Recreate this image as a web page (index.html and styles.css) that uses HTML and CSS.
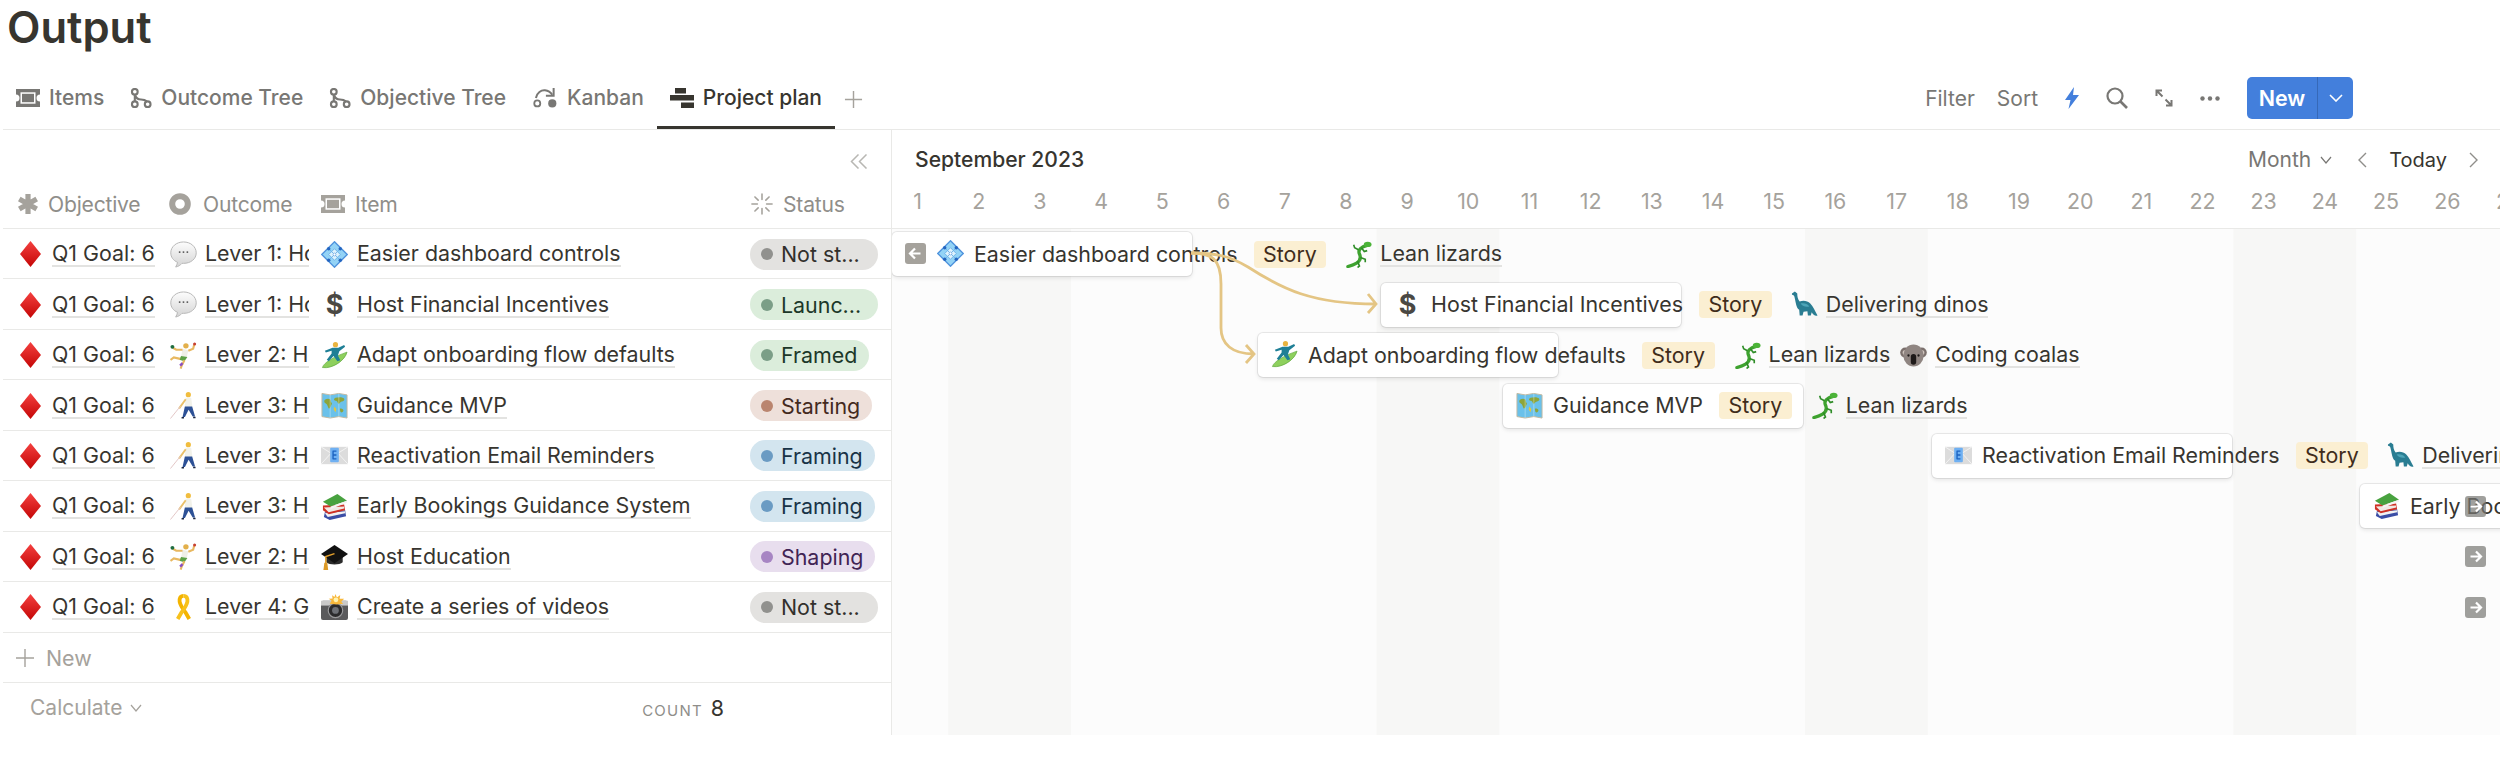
FILE: index.html
```html
<!DOCTYPE html>
<html lang="en">
<head>
<meta charset="utf-8">
<title>Output</title>
<link rel="stylesheet" href="styles.css">
</head>
<body>
<svg class="defs" aria-hidden="true">
  <defs>
    <linearGradient id="g-red" x1="0" y1="0" x2="0" y2="1"><stop offset="0" stop-color="#f4403f"/><stop offset="1" stop-color="#c40606"/></linearGradient>
    <linearGradient id="g-bub" x1="0" y1="0" x2="0" y2="1"><stop offset="0" stop-color="#fdfdfd"/><stop offset="1" stop-color="#d4d4d4"/></linearGradient>
  </defs>
  <symbol id="e-red" viewBox="0 0 21 26"><path d="M10.500 0 21 13 10.500 26 0 13z" fill="url(#g-red)"/></symbol>
  <symbol id="e-bubble" viewBox="0 0 28 28"><path d="M14 1C6.500 1 .8 6 .8 12.300c0 4.400 2.700 8 7 9.800-.3 1.800-1 3.300-1.900 4.900 2.600-.5 4.900-1.900 6.500-3.800H14c7.500 0 13.200-4.600 13.200-10.900S21.500 1 14 1z" fill="url(#g-bub)" stroke="#b5b5b5"/><circle cx="10" cy="11.500" r="1" fill="#555"/><circle cx="14" cy="11.500" r="1" fill="#555"/><circle cx="18" cy="11.500" r="1" fill="#555"/></symbol>
  <symbol id="e-gem" viewBox="0 0 28 28"><path d="M14 .8 27.200 14 14 27.200 .8 14z" fill="#93d3f6" stroke="#4f93dd" stroke-width="1.400"/><path d="M14 8 20 14 14 20 8 14z" fill="#dff3fd" stroke="#6fb2e8"/><path d="M7.500 7.500 20.500 20.500M20.500 7.500 7.500 20.500" stroke="#6fb2e8"/><circle cx="14" cy="14" r="1.500" fill="#fff" stroke="#4f93dd" stroke-width=".6"/><circle cx="8" cy="8" r="1.800" fill="#2565c0"/><circle cx="20" cy="8" r="1.800" fill="#2565c0"/><circle cx="8" cy="20" r="1.800" fill="#2565c0"/><circle cx="20" cy="20" r="1.800" fill="#2565c0"/></symbol>
  <symbol id="e-ball" viewBox="0 0 28 28"><circle cx="16.500" cy="4" r="2.800" fill="#e3b04b"/><path d="M13 7 19 8.500 17.500 15.500 11.500 15z" fill="#efefe8"/><path d="M11.500 14.500 18 15.500 15 20 9.500 18.500z" fill="#5ca146"/><path d="M13 8 6.500 8 3 6" stroke="#e8b860" stroke-width="2.200" fill="none"/><path d="M19 9 24 7 25 3" stroke="#e8b860" stroke-width="2.200" fill="none"/><circle cx="2.500" cy="5" r="2" fill="#1f6d3f"/><circle cx="25.500" cy="2" r="1.600" fill="#c7402f"/><path d="M10.500 17.500 4 16 .5 18.500" stroke="#e8b860" stroke-width="2.200" fill="none"/><path d="M15 19 12.500 23.500 11 27.500" stroke="#e8b860" stroke-width="2.200" fill="none"/><path d="M13 22 10.500 24.500" stroke="#8a4fc0" stroke-width="2.600"/></symbol>
  <symbol id="e-cane" viewBox="0 0 28 28"><circle cx="19" cy="2.800" r="2.700" fill="#f1bd3e"/><path d="M16 6h6l1.200 9.500h-7.800z" fill="#f2f2ea"/><path d="M15.400 15 23 15 26 25.500h-2.500L19.300 18.500 15.500 26h-2.500z" fill="#2d5196"/><path d="M16.300 7.500 9.500 17" stroke="#e9c06a" stroke-width="2"/><path d="M11 14.500 .5 27.500" stroke="#e2c5c5" stroke-width="1"/><path d="M24 26.500h2.500M14.500 26.800H12" stroke="#1b2740" stroke-width="1.500"/></symbol>
  <symbol id="e-surf" viewBox="0 0 28 28"><path d="M1.500 26.500C3 21 14 15 27 10.500 25 19 12 28 1.500 26.500z" fill="#8ed05d" stroke="#5da53a" stroke-width=".7"/><circle cx="15" cy="2.800" r="2.700" fill="#e9b440"/><path d="M12 6 18 6 24 3 25 5 19 9.500 17.500 14 20 19 17 20 13 14.500 8 20 6 18.500 11 12 11 9 5 11 4 9z" fill="#1f7f96"/></symbol>
  <symbol id="e-map" viewBox="0 0 28 28"><path d="M1 1.500 9.500 3 18.500 1.500 27 3v24l-8.500-1.500L9.500 27 1 25.500z" fill="#6ac1ea" stroke="#c0b8a0"/><path d="M4 8c3-2 6-1 6 1s2 2 1 4-2 5-3 4-1-4-3-5-2-3-1-4zM15 6c3-1 8-1 9 1s-2 3-3 3-2 3-3 2-1-3-3-3 -2-2 0-3zM20 17c2 0 4 1 3 3s-3 1-3 0-1-3 0-3z" fill="#8da53b"/><path d="M14 15l2 3-1 3-2-3z" fill="#e1c743"/><path d="M9.500 3v24M18.500 1.500v24" stroke="#fff" stroke-opacity=".35"/></symbol>
  <symbol id="e-mail" viewBox="0 0 28 28"><path d="M0 5h28v18H0z" fill="#dcdcdc"/><path d="M0 5 14 14 28 5M0 23 10 12M28 23 18 12" fill="none" stroke="#f4f4f4"/><rect x="9.500" y="6" width="9" height="15" rx="1" fill="#6fb0f2"/><path d="M12 9.500h4M12 13.500h4M12 17.500h4M12.500 9.500v8" stroke="#1c62c0" stroke-width="1.400" fill="none"/></symbol>
  <symbol id="e-books" viewBox="0 0 28 28"><path d="M4 20 25 18 26 24 9 28 3 25z" fill="#3b4ea6"/><path d="M4 21 25 19v2L7 25z" fill="#f2f2f2"/><path d="M2 13 24 12 25 18 8 22 2 18z" fill="#cf3125"/><path d="M3 15 24 14v2L8 20z" fill="#f1e9e4"/><path d="M2 9 17 1 27 8 10 14z" fill="#48a23f"/><path d="M10 14 27 8v2L10 16.500z" fill="#f4f4f4"/></symbol>
  <symbol id="e-cap" viewBox="0 0 28 28"><path d="M5.500 13v7c3 3 14 3 17 0v-7z" fill="#2b2b2b"/><path d="M14 2 28 11.500 14 21 0 11.500z" fill="#111"/><path d="M14 11 5 14v7" stroke="#e3a02c" stroke-width="1.600" fill="none"/><path d="M3.500 20.500h3L7.500 28h-5z" fill="#dd9a26"/></symbol>
  <symbol id="e-ribbon" viewBox="0 0 24 28"><path d="M12 2C8.500 2 7.500 5 8 8c.6 3.500 3 7 6 11l4 7" fill="none" stroke="#f4b400" stroke-width="4"/><path d="M12 2c3.500 0 4.500 3 4 6-.6 3.500-3 7-6 11l-4 7" fill="none" stroke="#f7c11c" stroke-width="4"/></symbol>
  <symbol id="e-camera" viewBox="0 0 28 28"><rect x="0" y="7" width="28" height="20" rx="2" fill="#5a5a5c"/><rect x="0" y="7" width="28" height="5" fill="#c9c9c9"/><circle cx="15" cy="17" r="7.500" fill="#2b2b2d" stroke="#9a9a9c" stroke-width="1.200"/><circle cx="15" cy="17" r="3.500" fill="#6d7076"/><path d="M15 0l1.500 3.500L20 1l-.7 4L24 5l-3 3 2 2-7 1-7-1 2-3-3-2 4-.3-.5-3.500 2.500 2z" fill="#f8b83c"/><circle cx="15.500" cy="6" r="2.500" fill="#fff3b0"/></symbol>
  <symbol id="e-lizard" viewBox="0 0 28 28"><path d="M23 4.500C17 6 13 9 15 13.500c1.500 3.400 1 7-3 9.500-3 1.800-6 2.800-9 3.500" fill="none" stroke="#3ea22f" stroke-width="3.400" stroke-linecap="round"/><ellipse cx="23.500" cy="3.500" rx="4" ry="2.800" fill="#4bb338"/><path d="M17 7 20 11 23 10M14 9 10 7 9 4M16 17 21 19 21 22M13 21 15 26 13 27.500" fill="none" stroke="#2f8d28" stroke-width="1.700"/></symbol>
  <symbol id="e-dino" viewBox="0 0 28 28"><path d="M1 2.500 4 .5l2.500 2c0 3 .5 6 2.500 8.500 3.500-1.500 8-1 11 2 3 3 5 8 7.500 12.500-2.500 1-4.500-1-6-3.500l-1 3.500h-3l-.5-4.500-4 .5-1 4H9l-.5-6C5.500 18 5 12 3.800 7 3.500 5.500 3 4 1 4z" fill="#2a7d92"/><path d="M10 13c3-1 7 0 9 3-3 .5-7 .5-9-3z" fill="#4ea5b8"/></symbol>
  <symbol id="e-koala" viewBox="0 0 28 28"><circle cx="5.500" cy="11" r="5.300" fill="#7b706c"/><circle cx="22.500" cy="11" r="5.300" fill="#7b706c"/><circle cx="5.500" cy="11" r="2.800" fill="#cfc4bd"/><circle cx="22.500" cy="11" r="2.800" fill="#cfc4bd"/><ellipse cx="14" cy="14" rx="10.500" ry="11.500" fill="#8f8581"/><rect x="11.200" y="12.500" width="5.600" height="11" rx="2.800" fill="#1e1a19"/><circle cx="8.800" cy="14" r="1.200" fill="#1e1a19"/><circle cx="19.200" cy="14" r="1.200" fill="#1e1a19"/></symbol>
  <symbol id="i-ticket" viewBox="0 0 24 18"><path d="M0 0h24v5.500a3.500 3.500 0 0 0 0 7V18H0v-5.500a3.500 3.500 0 0 0 0-7z" fill="currentColor"/><rect x="4.500" y="3.300" width="15" height="11.400" fill="#fff"/><rect x="6" y="4.800" width="12" height="8.400" fill="currentColor"/></symbol>
  <symbol id="i-tree" viewBox="0 0 22 21"><g fill="none" stroke="currentColor" stroke-width="2.200"><circle cx="4.500" cy="4" r="3"/><circle cx="4.500" cy="17" r="3"/><circle cx="18" cy="17" r="3"/><path d="M4.500 7v7M5 8c1 3 3 4 6 4 3 0 5 1 6 2"/></g></symbol>
  <symbol id="i-kanban" viewBox="0 0 26 22"><circle cx="4.500" cy="17" r="3.300" fill="none" stroke="currentColor" stroke-width="2"/><circle cx="21" cy="17" r="4.500" fill="currentColor"/><path d="M3 11C4 5 9 2 13 2.500c3 .4 6 2 8 5" fill="none" stroke="currentColor" stroke-width="2.200"/><path d="M22.500 0v8.500H14" fill="none" stroke="currentColor" stroke-width="2.200"/></symbol>
  <symbol id="i-plan" viewBox="0 0 24 20"><rect x="5" y="0" width="11" height="5.500" fill="currentColor"/><rect x="0" y="7" width="24" height="5.500" fill="currentColor"/><rect x="11" y="14.500" width="13" height="5.500" fill="currentColor"/></symbol>
  <symbol id="i-star" viewBox="0 0 22 22"><path d="M11 11V1M11 11l8.700-5M11 11l8.700 5M11 11v10M11 11l-8.700 5M11 11 2.300 6" stroke="currentColor" stroke-width="5.200"/></symbol>
  <symbol id="i-status" viewBox="0 0 24 24"><path d="M12 1v6M12 17v6M1 12h6M17 12h6M4.300 4.300l3.500 3.500M16.200 16.200l3.500 3.500M4.300 19.700l3.500-3.500M16.200 7.800l3.500-3.500" stroke="currentColor" stroke-width="1.700" stroke-linecap="round"/></symbol>
  <symbol id="i-left" viewBox="0 0 21 21"><path d="M15.500 10.500h-10M10 5.500l-5 5 5 5" fill="none" stroke="#fff" stroke-width="2.200"/></symbol>
  <symbol id="i-right" viewBox="0 0 21 21"><path d="M5.500 10.500h10M11 5.500l5 5-5 5" fill="none" stroke="#fff" stroke-width="2.200"/></symbol>
</svg>

<div class="page">
  <h1 class="title">Output</h1>

  <nav class="views">
    <a class="tab"><svg class="tab-icon w24"><use href="#i-ticket"/></svg>Items</a>
    <a class="tab"><svg class="tab-icon w22"><use href="#i-tree"/></svg>Outcome Tree</a>
    <a class="tab"><svg class="tab-icon w22"><use href="#i-tree"/></svg>Objective Tree</a>
    <a class="tab"><svg class="tab-icon w26"><use href="#i-kanban"/></svg>Kanban</a>
    <a class="tab active"><svg class="tab-icon w24"><use href="#i-plan"/></svg>Project plan</a>
    <svg class="add-view" viewBox="0 0 20 20"><path d="M10 1v18M1 10h18" stroke="currentColor" stroke-width="1.500"/></svg>
    <div class="actions">
      <span class="action">Filter</span>
      <span class="action">Sort</span>
      <svg class="bolt" viewBox="0 0 14 22"><path d="M9 0 0 13h5.500L3.500 22 14 8H8z" fill="#437fdc"/></svg>
      <svg class="tool" viewBox="0 0 22 22"><circle cx="9" cy="9" r="7.500" fill="none" stroke="currentColor" stroke-width="2.200"/><path d="M14.500 14.500 21 21" stroke="currentColor" stroke-width="2.600"/></svg>
      <svg class="tool small" viewBox="0 0 18 18"><path d="M2 2l5.500 5.500M10.500 10.500 16 16M1.500 7V1.500H7M16.500 11v5.500H11" fill="none" stroke="currentColor" stroke-width="2"/></svg>
      <svg class="dots" viewBox="0 0 20 5"><circle cx="2.500" cy="2.500" r="2.200" fill="currentColor"/><circle cx="10" cy="2.500" r="2.200" fill="currentColor"/><circle cx="17.500" cy="2.500" r="2.200" fill="currentColor"/></svg>
      <div class="new-btn">
        <span class="new-main">New</span>
        <span class="new-more"><svg class="chev-w" viewBox="0 0 14 8"><path d="M1 1l6 6 6-6" fill="none" stroke="#fff" stroke-width="1.600"/></svg></span>
      </div>
    </div>
  </nav>

  <main class="board">
    <section class="table">
      <div class="collapse"><svg class="collapse-icon" viewBox="0 0 18 15"><path d="M8.500 .5 1.500 7.500l7 7M16.500 .5l-7 7 7 7" fill="none" stroke="currentColor" stroke-width="1.500"/></svg></div>
      <div class="cols row-grid">
        <div class="head h-obj"><svg class="head-icon"><use href="#i-star"/></svg>Objective</div>
        <div class="head h-out"><svg class="head-icon" viewBox="0 0 22 22"><circle cx="11" cy="11" r="7.800" fill="none" stroke="currentColor" stroke-width="6"/></svg>Outcome</div>
        <div class="head h-item"><svg class="head-icon ticket"><use href="#i-ticket"/></svg>Item</div>
        <div class="head h-status"><svg class="head-icon"><use href="#i-status"/></svg>Status</div>
      </div>

      <div class="row row-grid">
        <div class="cell c-obj"><svg class="em-red"><use href="#e-red"/></svg><span class="link">Q1 Goal: 6</span></div>
        <div class="cell c-out"><svg class="em"><use href="#e-bubble"/></svg><span class="link clip">Lever 1: How might we</span></div>
        <div class="cell c-item"><svg class="em"><use href="#e-gem"/></svg><span class="link">Easier dashboard controls</span></div>
        <div class="cell c-status"><span class="pill trunc gray"><i class="dot"></i>Not st...</span></div>
      </div>
      <div class="row row-grid">
        <div class="cell c-obj"><svg class="em-red"><use href="#e-red"/></svg><span class="link">Q1 Goal: 6</span></div>
        <div class="cell c-out"><svg class="em"><use href="#e-bubble"/></svg><span class="link clip">Lever 1: How might we</span></div>
        <div class="cell c-item"><span class="em dollar">$</span><span class="link">Host Financial Incentives</span></div>
        <div class="cell c-status"><span class="pill trunc green"><i class="dot"></i>Launc...</span></div>
      </div>
      <div class="row row-grid">
        <div class="cell c-obj"><svg class="em-red"><use href="#e-red"/></svg><span class="link">Q1 Goal: 6</span></div>
        <div class="cell c-out"><svg class="em"><use href="#e-ball"/></svg><span class="link clip">Lever 2: How might we</span></div>
        <div class="cell c-item"><svg class="em"><use href="#e-surf"/></svg><span class="link">Adapt onboarding flow defaults</span></div>
        <div class="cell c-status"><span class="pill green"><i class="dot"></i>Framed</span></div>
      </div>
      <div class="row row-grid">
        <div class="cell c-obj"><svg class="em-red"><use href="#e-red"/></svg><span class="link">Q1 Goal: 6</span></div>
        <div class="cell c-out"><svg class="em"><use href="#e-cane"/></svg><span class="link clip">Lever 3: How might we</span></div>
        <div class="cell c-item"><svg class="em"><use href="#e-map"/></svg><span class="link">Guidance MVP</span></div>
        <div class="cell c-status"><span class="pill brown"><i class="dot"></i>Starting</span></div>
      </div>
      <div class="row row-grid">
        <div class="cell c-obj"><svg class="em-red"><use href="#e-red"/></svg><span class="link">Q1 Goal: 6</span></div>
        <div class="cell c-out"><svg class="em"><use href="#e-cane"/></svg><span class="link clip">Lever 3: How might we</span></div>
        <div class="cell c-item"><svg class="em"><use href="#e-mail"/></svg><span class="link">Reactivation Email Reminders</span></div>
        <div class="cell c-status"><span class="pill blue"><i class="dot"></i>Framing</span></div>
      </div>
      <div class="row row-grid">
        <div class="cell c-obj"><svg class="em-red"><use href="#e-red"/></svg><span class="link">Q1 Goal: 6</span></div>
        <div class="cell c-out"><svg class="em"><use href="#e-cane"/></svg><span class="link clip">Lever 3: How might we</span></div>
        <div class="cell c-item"><svg class="em"><use href="#e-books"/></svg><span class="link">Early Bookings Guidance System</span></div>
        <div class="cell c-status"><span class="pill blue"><i class="dot"></i>Framing</span></div>
      </div>
      <div class="row row-grid">
        <div class="cell c-obj"><svg class="em-red"><use href="#e-red"/></svg><span class="link">Q1 Goal: 6</span></div>
        <div class="cell c-out"><svg class="em"><use href="#e-ball"/></svg><span class="link clip">Lever 2: How might we</span></div>
        <div class="cell c-item"><svg class="em"><use href="#e-cap"/></svg><span class="link">Host Education</span></div>
        <div class="cell c-status"><span class="pill purple"><i class="dot"></i>Shaping</span></div>
      </div>
      <div class="row row-grid">
        <div class="cell c-obj"><svg class="em-red"><use href="#e-red"/></svg><span class="link">Q1 Goal: 6</span></div>
        <div class="cell c-out"><svg class="em"><use href="#e-ribbon"/></svg><span class="link clip">Lever 4: Grow the</span></div>
        <div class="cell c-item"><svg class="em"><use href="#e-camera"/></svg><span class="link">Create a series of videos</span></div>
        <div class="cell c-status"><span class="pill trunc gray"><i class="dot"></i>Not st...</span></div>
      </div>

      <div class="row new-row"><svg class="plus" viewBox="0 0 18 18"><path d="M9 0v18M0 9h18" stroke="currentColor" stroke-width="1.400"/></svg>New</div>
      <div class="foot">
        <span class="calc">Calculate<svg class="chev-s" viewBox="0 0 12 8"><path d="M1 1l5 6 5-6" fill="none" stroke="currentColor" stroke-width="1.200"/></svg></span>
        <span class="count"><span class="count-label">COUNT</span><span class="count-val">8</span></span>
      </div>
    </section>

    <section class="chart">
      <header class="chart-head">
        <div class="month-bar">
          <span class="month-name">September 2023</span>
          <div class="month-tools">
            <span class="scale">Month<svg class="chev-s" viewBox="0 0 12 8"><path d="M1 1l5 6 5-6" fill="none" stroke="currentColor" stroke-width="1.200"/></svg></span>
            <svg class="nav-arrow" viewBox="0 0 9 16"><path d="M8 1 1 8l7 7" fill="none" stroke="currentColor" stroke-width="1.400"/></svg>
            <span class="today">Today</span>
            <svg class="nav-arrow" viewBox="0 0 9 16"><path d="M1 1l7 7-7 7" fill="none" stroke="currentColor" stroke-width="1.400"/></svg>
          </div>
        </div>
        <div class="days">
          <span>1</span><span>2</span><span>3</span><span>4</span><span>5</span><span>6</span><span>7</span><span>8</span><span>9</span><span>10</span><span>11</span><span>12</span><span>13</span><span>14</span><span>15</span><span>16</span><span>17</span><span>18</span><span>19</span><span>20</span><span>21</span><span>22</span><span>23</span><span>24</span><span>25</span><span>26</span><span>27</span>
        </div>
      </header>

      <div class="canvas">
        <div class="lane l1">
          <div class="bar">
            <svg class="jump"><use href="#i-left"/></svg>
            <svg class="em"><use href="#e-gem"/></svg>
            <span class="bar-name">Easier dashboard controls</span>
          </div>
          <span class="tag">Story</span>
          <svg class="em"><use href="#e-lizard"/></svg><span class="link">Lean lizards</span>
        </div>
        <div class="lane l2">
          <div class="bar">
            <span class="em dollar">$</span>
            <span class="bar-name">Host Financial Incentives</span>
          </div>
          <span class="tag">Story</span>
          <svg class="em"><use href="#e-dino"/></svg><span class="link">Delivering dinos</span>
        </div>
        <div class="lane l3">
          <div class="bar">
            <svg class="em"><use href="#e-surf"/></svg>
            <span class="bar-name">Adapt onboarding flow defaults</span>
          </div>
          <span class="tag">Story</span>
          <svg class="em"><use href="#e-lizard"/></svg><span class="link">Lean lizards</span>
          <svg class="em koala"><use href="#e-koala"/></svg><span class="link">Coding coalas</span>
        </div>
        <div class="lane l4">
          <div class="bar">
            <svg class="em"><use href="#e-map"/></svg>
            <span class="bar-name">Guidance MVP</span>
          </div>
          <span class="tag">Story</span>
          <svg class="em"><use href="#e-lizard"/></svg><span class="link">Lean lizards</span>
        </div>
        <div class="lane l5">
          <div class="bar">
            <svg class="em"><use href="#e-mail"/></svg>
            <span class="bar-name">Reactivation Email Reminders</span>
          </div>
          <span class="tag">Story</span>
          <svg class="em"><use href="#e-dino"/></svg><span class="link">Delivering dinos</span>
        </div>
        <div class="lane l6">
          <div class="bar">
            <svg class="em"><use href="#e-books"/></svg>
            <span class="bar-name">Early Bookings Guidance System</span>
          </div>
        </div>

        <svg class="links" viewBox="0 0 1608 506">
          <path d="M299 24C322 24 336 26 356 38 390 60 420 75 484 75M476 65l8 10-8 9"/>
          <path d="M299 24C320 24 329 30 329 55V99C329 115 340 125 362 125M354 116l8 9-8 9"/>
        </svg>

        <svg class="off off1"><use href="#i-right"/></svg>
        <svg class="off off2"><use href="#i-right"/></svg>
        <svg class="off off3"><use href="#i-right"/></svg>
      </div>
    </section>
  </main>
</div>
</body>
</html>
```
FILE: styles.css
```css
* { box-sizing: border-box; }
html, body { margin: 0; padding: 0; background: #fff; overflow: hidden; }
body {
  font-family: Inter, "Liberation Sans", sans-serif;
  font-size: 21.4px;
  color: #37352f;
}
.defs { position: absolute; width: 0; height: 0; }
.page { width: 2500px; height: 765px; padding-left: 3px; overflow: hidden; }

.title {
  margin: 0;
  height: 69px;
  padding: 3px 0 0 4px;
  font-size: 43.5px;
  line-height: 48px;
  font-weight: 600;
}

.views {
  display: flex;
  align-items: stretch;
  height: 61px;
  border-bottom: 1px solid #e9e9e7;
}
.tab {
  display: flex;
  align-items: center;
  gap: 9px;
  padding: 0 13px;
  color: #787774;
  font-size: 21px;
  font-weight: 500;
  white-space: nowrap;
  border-bottom: 3px solid transparent;
}
.tab.active { color: #37352f; border-bottom-color: #37352f; }
.tab-icon { height: 20px; flex: none; color: #787774; }
.tab.active .tab-icon { color: #37352f; }
.w22 { width: 22px; }
.w24 { width: 24px; }
.w26 { width: 26px; }
.add-view { width: 19px; height: 19px; margin: 21px 0 0 9px; color: #a5a29c; }

.actions {
  display: flex;
  align-items: center;
  gap: 27px;
  margin-left: auto;
  padding: 0 147px 2px 0;
  color: #787774;
}
.action { font-size: 21px; }
.action + .action { margin-left: -5px; }
.bolt { width: 14px; height: 22px; }
.tool { width: 22px; height: 22px; }
.tool.small { width: 18px; height: 18px; }
.dots { width: 20px; height: 5px; }
.new-btn {
  display: flex;
  width: 106px;
  height: 42px;
  border-radius: 5px;
  background: #437fdc;
  color: #fff;
  font-weight: 600;
  overflow: hidden;
}
.new-main { flex: 1; display: flex; align-items: center; justify-content: center; border-right: 1px solid #3669b8; }
.new-more { width: 35px; display: flex; align-items: center; justify-content: center; }
.chev-w { width: 14px; height: 8px; }

.board { display: flex; height: 605px; }

.table { width: 889px; flex: none; border-right: 1px solid #e9e9e7; }
.collapse { height: 50px; padding: 24px 23px 0 0; display: flex; justify-content: flex-end; color: #b8b7b3; }
.collapse-icon { width: 18px; height: 15px; }
.row-grid { display: grid; grid-template-columns: 160px 152px 430px 146px; }
.cols { height: 49px; border-bottom: 1px solid #e9e9e7; align-items: center; color: #8f8e8a; font-size: 21.1px; letter-spacing: -0.2px; }
.head { display: flex; align-items: center; gap: 9px; white-space: nowrap; }
.head-icon { width: 22px; height: 22px; flex: none; color: #a5a29c; }
.head-icon.ticket { width: 24px; height: 18px; }
.h-obj { padding-left: 14px; }
.h-out { padding-left: 6px; gap: 12px; }
.h-item { padding-left: 6px; gap: 10px; }
.h-status { padding-left: 6px; gap: 10px; }

.row { height: 50.44px; padding-top: 1px; border-bottom: 1px solid #e9e9e7; align-items: center; }
.cell { display: flex; align-items: center; min-width: 0; }
.c-obj { padding-left: 17px; gap: 11px; }
.c-out { padding-left: 7px; gap: 8px; }
.c-item { padding-left: 6px; gap: 9px; }
.c-status { padding-left: 5px; }
.em-red { width: 21px; height: 26px; flex: none; }
.em { width: 27px; height: 27px; flex: none; }
.dollar { font-size: 27px; line-height: 27px; font-weight: 700; text-align: center; color: #4a4843; }
.link {
  display: block;
  line-height: 24px;
  white-space: nowrap;
  border-bottom: 2px solid #e3e3e1;
  color: #37352f;
}
.clip { width: 104px; overflow: hidden; }

.pill {
  display: inline-flex;
  align-items: center;
  gap: 8px;
  height: 31px;
  padding: 0 12px 0 11px;
  border-radius: 16px;
  white-space: nowrap;
}
.trunc { width: 128px; }
.dot { width: 12px; height: 12px; border-radius: 50%; flex: none; }
.gray { background: #e3e2e0; color: #32302c; }
.gray .dot { background: #91918e; }
.green { background: #dbeddb; color: #1c3829; }
.green .dot { background: #7b9e87; }
.brown { background: #eee0da; color: #442a1e; }
.brown .dot { background: #ba856f; }
.blue { background: #d3e5ef; color: #183347; }
.blue .dot { background: #6a9bc3; }
.purple { background: #e8deee; color: #412454; }
.purple .dot { background: #a785c3; }

.new-row { display: flex; padding-left: 13px; gap: 12px; color: #a5a29c; }
.plus { width: 18px; height: 18px; }
.foot { display: flex; align-items: center; height: 52px; padding: 0 0 2px 27px; color: #a5a29c; }
.calc { display: flex; align-items: center; gap: 8px; font-size: 21px; }
.chev-s { width: 12px; height: 8px; }
.count { margin-left: auto; margin-right: 167px; display: flex; align-items: baseline; gap: 8px; }
.count-label { font-size: 15px; letter-spacing: 1.2px; color: #8f8e8a; }
.count-val { color: #37352f; }

.chart { flex: 1; min-width: 0; overflow: hidden; }
.chart-head { height: 99px; border-bottom: 1px solid #e9e9e7; }
.month-bar { height: 59px; display: flex; align-items: center; justify-content: space-between; padding: 0 22px 0 23px; }
.month-name { font-weight: 500; font-size: 21.1px; }
.month-tools { display: flex; align-items: center; gap: 22px; color: #787774; font-size: 21px; }
.scale { display: flex; align-items: center; gap: 9px; margin-right: 4px; }
.nav-arrow { width: 9px; height: 16px; color: #8f8e8a; }
.today { color: #37352f; font-size: 20px; }
.days { display: flex; margin-top: 1px; margin-left: -5px; line-height: 22px; color: #a5a29c; }
.days span { width: 61.2px; flex: none; text-align: center; }

.canvas {
  position: relative;
  height: 506px;
  background-color: #fcfcfc;
  background-image: linear-gradient(90deg, #f7f7f6 122.4px, transparent 0);
  background-size: 428.4px 100%;
  background-position: 56.2px 0;
  background-repeat: repeat-x;
}
.lane { display: flex; align-items: center; height: 50.44px; white-space: nowrap; }
.lane > * { position: relative; }
.l1 { padding-left: 0; }
.l2 { padding-left: 489px; }
.l3 { padding-left: 366px; }
.l4 { padding-left: 611px; }
.l5 { padding-left: 1040px; }
.l6 { padding-left: 1468px; }
.bar {
  display: flex;
  align-items: center;
  gap: 10px;
  height: 44px;
  padding: 0 0 1px 13px;
}
.bar::before {
  content: "";
  position: absolute;
  top: 0;
  left: 0;
  width: 300px;
  height: 44px;
  background: #fff;
  border-radius: 5px;
  box-shadow: 0 0 0 1px rgba(15, 15, 15, .08), 0 2px 4px rgba(15, 15, 15, .1);
}
.bar > * { position: relative; }
.bar-name { color: #37352f; }
.jump { width: 21px; height: 21px; margin-right: 1px; background: #a5a29c; border-radius: 3px; flex: none; }
.tag {
  height: 27px;
  line-height: 27px;
  margin: 0 19px 0 16px;
  padding: 0 9.5px;
  border-radius: 4px;
  background: #fbefd2;
  color: #402c1b;
}
.lane .link { margin-left: 8px; }
.koala { margin-left: 10px; }

.links { position: absolute; top: 0; left: 0; width: 1608px; height: 506px; pointer-events: none; }
.links path { fill: none; stroke: #e4c584; stroke-width: 2.800; }

.off { position: absolute; right: 14px; width: 21px; height: 21px; border-radius: 3px; background: rgba(120, 119, 116, .7); }
.off1 { top: 267px; }
.off2 { top: 317px; }
.off3 { top: 368px; }
```
